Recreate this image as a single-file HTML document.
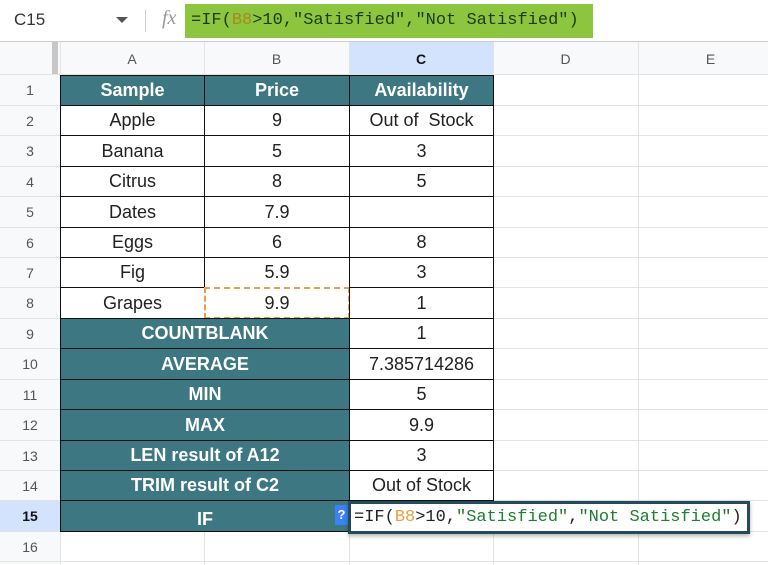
<!DOCTYPE html><html><head><style>
body{margin:0;width:768px;height:565px;overflow:hidden;background:#fff;font-family:"Liberation Sans",Arial,sans-serif;position:relative}
.a{position:absolute;box-sizing:border-box}
.gl{position:absolute;background:#e2e3e3}
.c{position:absolute;box-sizing:border-box;display:flex;align-items:center;justify-content:center;font-size:18px;color:#222}
.t{background:#3d7782;color:#fff;font-weight:bold;border:1.5px solid #111}
.w{border:1.5px solid #111;background:#fff}
.rh{position:absolute;left:0;width:60px;height:30px;display:flex;align-items:center;justify-content:center;font-size:14px;color:#555}
.ch{position:absolute;top:42px;height:33px;display:flex;align-items:center;justify-content:center;font-size:14px;color:#555}
.mono{font-family:"Liberation Mono",monospace}
</style></head><body>
<div class="a" style="left:0;top:0;width:768px;height:42px;background:#fff;border-bottom:1px solid #ccc"></div>
<div class="a" style="left:14px;top:10px;font-size:17px;color:#333">C15</div>
<div class="a" style="left:116px;top:17px;width:0;height:0;border-left:6px solid transparent;border-right:6px solid transparent;border-top:6px solid #555"></div>
<div class="a" style="left:145px;top:10px;width:1px;height:22px;background:#ccc"></div>
<div class="a" style="left:162px;top:7px;font-size:20px;color:#999;font-style:italic;font-family:'Liberation Serif',serif">fx</div>
<div class="a mono" style="left:185px;top:4px;width:408px;height:34px;background:#8cc63f;font-size:17px;color:#1d3a14;line-height:34px;padding-left:6px;white-space:nowrap">=IF(<span style="color:#a8891f">B8</span>&gt;10,"Satisfied","Not Satisfied")</div>
<!-- headers -->
<div class="a" style="left:0;top:42px;width:768px;height:33px;background:#f8f9fa"></div>
<div class="a" style="left:0;top:75px;width:60px;height:490px;background:#f8f9fa"></div>
<div class="a" style="left:349px;top:42px;width:144px;height:33px;background:#d3e3fd"></div>
<div class="a" style="left:0;top:500px;width:60px;height:31px;background:#d3e3fd"></div>
<div class="a" style="left:52px;top:42px;width:6px;height:33px;background:#c7c7c7"></div>
<div class="ch" style="left:60px;width:144px">A</div>
<div class="ch" style="left:204px;width:145px">B</div>
<div class="ch" style="left:349px;width:144px;color:#111;font-weight:bold">C</div>
<div class="ch" style="left:493px;width:145px">D</div>
<div class="ch" style="left:638px;width:145px">E</div>
<!-- grid -->
<div class="gl" style="left:60px;top:42px;width:1px;height:523px"></div>
<div class="gl" style="left:204px;top:42px;width:1px;height:523px"></div>
<div class="gl" style="left:349px;top:42px;width:1px;height:523px"></div>
<div class="gl" style="left:493px;top:42px;width:1px;height:523px"></div>
<div class="gl" style="left:638px;top:42px;width:1px;height:523px"></div>
<div class="gl" style="left:0;top:74px;width:768px;height:1px"></div>
<div class="gl" style="left:0;top:105px;width:768px;height:1px"></div>
<div class="gl" style="left:0;top:135px;width:768px;height:1px"></div>
<div class="gl" style="left:0;top:166px;width:768px;height:1px"></div>
<div class="gl" style="left:0;top:196px;width:768px;height:1px"></div>
<div class="gl" style="left:0;top:227px;width:768px;height:1px"></div>
<div class="gl" style="left:0;top:257px;width:768px;height:1px"></div>
<div class="gl" style="left:0;top:287px;width:768px;height:1px"></div>
<div class="gl" style="left:0;top:318px;width:768px;height:1px"></div>
<div class="gl" style="left:0;top:348px;width:768px;height:1px"></div>
<div class="gl" style="left:0;top:379px;width:768px;height:1px"></div>
<div class="gl" style="left:0;top:409px;width:768px;height:1px"></div>
<div class="gl" style="left:0;top:440px;width:768px;height:1px"></div>
<div class="gl" style="left:0;top:470px;width:768px;height:1px"></div>
<div class="gl" style="left:0;top:500px;width:768px;height:1px"></div>
<div class="gl" style="left:0;top:531px;width:768px;height:1px"></div>
<div class="gl" style="left:0;top:561px;width:768px;height:1px"></div>
<!-- row numbers -->
<div class="rh" style="top:75px">1</div><div class="rh" style="top:106px">2</div><div class="rh" style="top:136px">3</div><div class="rh" style="top:167px">4</div><div class="rh" style="top:197px">5</div><div class="rh" style="top:228px">6</div><div class="rh" style="top:258px">7</div><div class="rh" style="top:288px">8</div><div class="rh" style="top:319px">9</div><div class="rh" style="top:349px">10</div><div class="rh" style="top:380px">11</div><div class="rh" style="top:410px">12</div><div class="rh" style="top:441px">13</div><div class="rh" style="top:471px">14</div><div class="rh" style="top:501px;color:#111;font-weight:bold">15</div><div class="rh" style="top:532px">16</div>
<!-- row1 -->
<div class="c t" style="left:60px;top:75px;width:145px;height:31px">Sample</div>
<div class="c t" style="left:204px;top:75px;width:146px;height:31px">Price</div>
<div class="c t" style="left:349px;top:75px;width:145px;height:31px">Availability</div>
<!-- data rows -->
<div class="c w" style="left:60px;top:105px;width:145px;height:31px">Apple</div><div class="c w" style="left:204px;top:105px;width:146px;height:31px">9</div><div class="c w" style="left:349px;top:105px;width:145px;height:31px">Out of&nbsp; Stock</div>
<div class="c w" style="left:60px;top:135px;width:145px;height:32px">Banana</div><div class="c w" style="left:204px;top:135px;width:146px;height:32px">5</div><div class="c w" style="left:349px;top:135px;width:145px;height:32px">3</div>
<div class="c w" style="left:60px;top:166px;width:145px;height:31px">Citrus</div><div class="c w" style="left:204px;top:166px;width:146px;height:31px">8</div><div class="c w" style="left:349px;top:166px;width:145px;height:31px">5</div>
<div class="c w" style="left:60px;top:196px;width:145px;height:32px">Dates</div><div class="c w" style="left:204px;top:196px;width:146px;height:32px">7.9</div><div class="c w" style="left:349px;top:196px;width:145px;height:32px"></div>
<div class="c w" style="left:60px;top:227px;width:145px;height:31px">Eggs</div><div class="c w" style="left:204px;top:227px;width:146px;height:31px">6</div><div class="c w" style="left:349px;top:227px;width:145px;height:31px">8</div>
<div class="c w" style="left:60px;top:257px;width:145px;height:31px">Fig</div><div class="c w" style="left:204px;top:257px;width:146px;height:31px">5.9</div><div class="c w" style="left:349px;top:257px;width:145px;height:31px">3</div>
<div class="c w" style="left:60px;top:287px;width:145px;height:32px">Grapes</div><div class="c w" style="left:204px;top:287px;width:146px;height:32px;border:2px dashed #e8a040">9.9</div><div class="c w" style="left:349px;top:287px;width:145px;height:32px">1</div>
<!-- merged -->
<div class="c t" style="left:60px;top:318px;width:290px;height:31px">COUNTBLANK</div><div class="c w" style="left:349px;top:318px;width:145px;height:31px">1</div>
<div class="c t" style="left:60px;top:348px;width:290px;height:32px">AVERAGE</div><div class="c w" style="left:349px;top:348px;width:145px;height:32px">7.385714286</div>
<div class="c t" style="left:60px;top:379px;width:290px;height:31px">MIN</div><div class="c w" style="left:349px;top:379px;width:145px;height:31px">5</div>
<div class="c t" style="left:60px;top:409px;width:290px;height:32px">MAX</div><div class="c w" style="left:349px;top:409px;width:145px;height:32px">9.9</div>
<div class="c t" style="left:60px;top:440px;width:290px;height:31px">LEN result of A12</div><div class="c w" style="left:349px;top:440px;width:145px;height:31px">3</div>
<div class="c t" style="left:60px;top:470px;width:290px;height:31px">TRIM result of C2</div><div class="c w" style="left:349px;top:470px;width:145px;height:31px">Out of Stock</div>
<div class="c t" style="left:60px;top:500px;width:290px;height:32px;padding-top:6px">IF</div>
<!-- editor -->
<div class="a" style="left:335px;top:505px;width:13px;height:20px;background:#3b82f6;color:#fff;font-size:13px;font-weight:bold;text-align:center;line-height:20px">?</div>
<div class="a mono" style="left:348px;top:501px;width:402px;height:33px;background:#fff;border:3px solid #234b5c;box-shadow:0 2px 4px rgba(0,0,0,.3);font-size:17px;line-height:27px;padding-left:3px;white-space:nowrap;color:#222">=IF(<span style="color:#e8a040">B8</span>&gt;10,<span style="color:#1e7d32">"Satisfied"</span>,<span style="color:#1e7d32">"Not Satisfied"</span>)</div>
</body></html>
